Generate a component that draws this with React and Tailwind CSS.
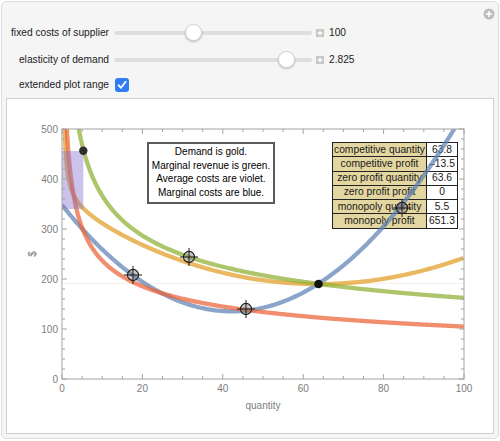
const sx = (q) => 62 + q * 4.02;
const sy = (v) => 379 - v * 0.5;

const el = 2.825;
const A = 456 * Math.pow(5.4, 1 / el);
const demand = (q) => A * Math.pow(q, -1 / el);
const mr = (q) => demand(q) * (1 - 1 / el);
const mc = (q) => 348 - 10.07 * q + 0.1192 * q * q;
const ac = (q) => 100 / q + 348 - 5.036 * q + 0.0397 * q * q;

function curve(f, q0) {
  let d = "";
  for (let q = q0; q <= 100.01; q += 0.25) {
    const v = Math.max(-200, Math.min(900, f(q)));
    d += (d ? "L" : "M") + sx(q).toFixed(2) + "," + sy(v).toFixed(2);
  }
  return d;
}

const xTicks = Array.from({ length: 21 }, (_, i) => i * 5);
const yTicks = Array.from({ length: 26 }, (_, i) => i * 20);

const rows = [
  ["competitive quantity", "63.8"],
  ["competitive profit", "–13.5"],
  ["zero profit quantity", "63.6"],
  ["zero profit profit", "0"],
  ["monopoly quantity", "5.5"],
  ["monopoly profit", "651.3"],
];

const locators = [
  [133, 275],
  [189, 257],
  [246, 309],
  [402, 208],
];

function Slider({ left }) {
  return (
    <div className="relative ml-[5px] h-[4px] w-[198px] rounded-full bg-[#dedede]">
      <div
        className={`absolute top-[-7px] h-[17px] w-[17px] rounded-full border border-[#d4d4d4] bg-white shadow-[0_1px_2px_rgba(0,0,0,0.25)] ${left}`}
      />
    </div>
  );
}

function PlusBox() {
  return (
    <div className="ml-[4px] flex h-[8px] w-[8px] items-center justify-center bg-[#c6c6c6]">
      <svg width="6" height="6" viewBox="0 0 6 6">
        <path d="M3 0.5V5.5M0.5 3H5.5" stroke="white" strokeWidth="1.4" />
      </svg>
    </div>
  );
}

export default function App() {
  return (
    <div className="h-[441px] w-[500px] bg-white p-px font-['Liberation_Sans',Arial,sans-serif] text-[10.2px] text-[#222]">
      <div className="h-[438px] rounded-[5px] border border-[#dcdcdc] bg-[#f5f5f5]">
        <div className="flex h-[20px] justify-end pr-[3px] pt-[6px]">
          <svg width="12" height="12" viewBox="0 0 12 12">
            <circle cx="6" cy="6" r="5.5" fill="#bdbdbd" />
            <path d="M6 3V9M3 6H9" stroke="white" strokeWidth="1.6" />
          </svg>
        </div>

        <div className="flex h-[22px] items-center">
          <div className="w-[107px] text-right">fixed costs of supplier</div>
          <Slider left="left-[71px]" />
          <PlusBox />
          <div className="ml-[5px]">100</div>
        </div>

        <div className="mt-[5px] flex h-[22px] items-center">
          <div className="w-[107px] text-right">elasticity of demand</div>
          <Slider left="left-[164px]" />
          <PlusBox />
          <div className="ml-[5px]">2.825</div>
        </div>

        <div className="mt-[3px] flex h-[22px] items-center">
          <div className="w-[107px] text-right">extended plot range</div>
          <div className="ml-[6px] flex h-[14px] w-[14px] items-center justify-center rounded-[3px] bg-[#2f7df6]">
            <svg width="10" height="10" viewBox="0 0 10 10">
              <path
                d="M1.5 5.2L4 7.8L8.6 1.8"
                fill="none"
                stroke="white"
                strokeWidth="1.8"
                strokeLinecap="round"
                strokeLinejoin="round"
              />
            </svg>
          </div>
        </div>

        <div className="relative mx-[4px] mt-[2px] h-[336px] border border-[#cfcfcf] bg-white">
          <div className="absolute left-[140px] top-[43px] w-[128px] border-2 border-[#5a5a5a] bg-white pb-[2px] pt-[1px] text-center text-[10px] leading-[13.7px] text-black">
            <div>Demand is gold.</div>
            <div>Marginal revenue is green.</div>
            <div>Average costs are violet.</div>
            <div>Marginal costs are blue.</div>
          </div>

          <table className="absolute left-[325px] top-[43px] w-[126px] table-fixed border-collapse text-center text-[10.3px] leading-none text-[#1a1a1a]">
            <tbody>
              {rows.map(([k, v]) => (
                <tr key={k} className="h-[14.3px]">
                  <td className="w-[94px] border border-[#222] bg-[#e3d6a1] p-0 whitespace-nowrap">{k}</td>
                  <td className="border border-[#222] bg-white p-0 whitespace-nowrap">{v}</td>
                </tr>
              ))}
            </tbody>
          </table>

          <svg
            className="pointer-events-none relative"
            width="485"
            height="334"
            viewBox="7 99 485 334"
          >
            <defs>
              <clipPath id="plot">
                <rect x="62" y="129" width="402" height="250" />
              </clipPath>
            </defs>

            <line x1="62" y1="283.5" x2="464" y2="283.5" stroke="#faeee8" strokeWidth="1" />

            <g clipPath="url(#plot)" fill="none" strokeWidth="4.3" strokeOpacity="0.72">
              <path d={curve(mc, 0)} stroke="#5e81b5" />
              <path d={curve(ac, 0.3)} stroke="#e19c24" />
              <path d={curve(demand, 1)} stroke="#8fb032" />
              <path d={curve(mr, 0.5)} stroke="#eb6235" />
              <rect x="62" y="151" width="21.3" height="58" fill="#8270cf" fillOpacity="0.42" stroke="none" />
            </g>

            <g stroke="#a3a3a3" strokeWidth="1">
              <rect x="62" y="129" width="402" height="250" fill="none" />
              {xTicks.map((q) => {
                const x = sx(q);
                const l = q % 20 === 0 ? 5 : 3;
                return (
                  <g key={"x" + q}>
                    <line x1={x} y1={379} x2={x} y2={379 - l} />
                    <line x1={x} y1={129} x2={x} y2={129 + l} />
                  </g>
                );
              })}
              {yTicks.map((v) => {
                const y = sy(v);
                const l = v % 100 === 0 ? 5 : 3;
                return (
                  <g key={"y" + v}>
                    <line x1={62} y1={y} x2={62 + l} y2={y} />
                    <line x1={464} y1={y} x2={464 - l} y2={y} />
                  </g>
                );
              })}
            </g>

            <g fill="#7d7d7d" fontSize="10" fontFamily="Liberation Sans, Arial, sans-serif">
              {[0, 20, 40, 60, 80, 100].map((q) => (
                <text key={q} x={sx(q)} y="392" textAnchor="middle">
                  {q}
                </text>
              ))}
              {[0, 100, 200, 300, 400, 500].map((v) => (
                <text key={v} x="58" y={sy(v) + 3.5} textAnchor="end">
                  {v}
                </text>
              ))}
              <text x="263" y="409" textAnchor="middle">
                quantity
              </text>
              <text x="36" y="254" textAnchor="middle" transform="rotate(-90 36 254)">
                $
              </text>
            </g>

            <circle cx="83.3" cy="150.8" r="4.2" fill="#2d2d2d" />
            <circle cx="318.5" cy="284" r="4.3" fill="#111" />

            {locators.map(([x, y]) => (
              <g key={x}>
                <circle cx={x} cy={y} r="5.6" fill="#808080" fillOpacity="0.45" stroke="#1a1a1a" strokeWidth="1.1" />
                <path
                  d={`M${x - 9} ${y}H${x + 9}M${x} ${y - 9}V${y + 9}`}
                  stroke="#1a1a1a"
                  strokeWidth="1"
                />
              </g>
            ))}
          </svg>
        </div>
      </div>
    </div>
  );
}
